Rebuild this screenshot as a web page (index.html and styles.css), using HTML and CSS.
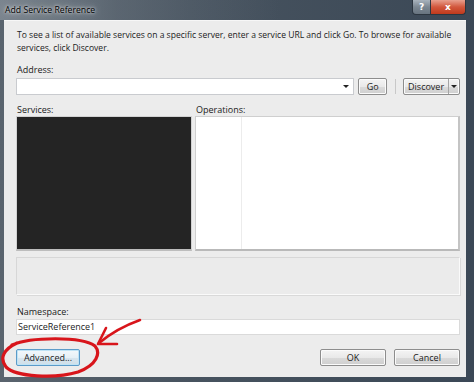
FILE: index.html
```html
<!DOCTYPE html>
<html lang="en">
<head>
  <meta charset="UTF-8">
  <title>Add Service Reference</title>
  <link rel="stylesheet" href="styles.css">
</head>
<body>
  <div class="window">
    <div class="titlebar">
      <span class="title">Add Service Reference</span>
      <div class="caption-buttons">
        <span class="cap-btn help">?</span>
        <span class="cap-btn close">x</span>
      </div>
    </div>

    <div class="client">
      <p class="intro">To see a list of available services on a specific server, enter a service URL and click Go. To browse for available<br>services, click Discover.</p>

      <label class="field-label">Address:</label>
      <div class="address-row">
        <div class="combo">
          <span class="combo-arrow"></span>
        </div>
        <button class="btn go">Go</button>
        <span class="sep"></span>
        <div class="btn split">
          <span class="split-main">Discover</span>
          <span class="split-arrow"><span class="combo-arrow"></span></span>
        </div>
      </div>

      <div class="lists">
        <div class="list-col services-col">
          <label class="field-label">Services:</label>
          <div class="services"></div>
        </div>
        <div class="list-col ops-col">
          <label class="field-label">Operations:</label>
          <div class="operations">
            <div class="ops-gutter"></div>
          </div>
        </div>
      </div>

      <div class="status-box"></div>

      <label class="field-label ns-label">Namespace:</label>
      <div class="textbox">ServiceReference1</div>

      <div class="button-row">
        <button class="btn advanced">Advanced...</button>
        <div class="right-buttons">
          <button class="btn wide">OK</button>
          <button class="btn wide">Cancel</button>
        </div>
      </div>
    </div>

    <svg class="annotation" width="474" height="382" viewBox="0 0 474 382">
      <path d="M12 345 C 30 337, 82 336, 95 346 C 101 353, 97 365, 78 372 C 55 379, 16 377, 6 367 C -1 358, 4 349, 17 343"
            fill="none" stroke="#d8151b" stroke-width="3.2" stroke-linecap="round"/>
      <path d="M140 320 C 126 325, 111 333, 99 343" fill="none" stroke="#d8151b" stroke-width="2.6" stroke-linecap="round"/>
      <path d="M106 328 L 98 344 L 117 344" fill="none" stroke="#d8151b" stroke-width="2.6" stroke-linecap="round" stroke-linejoin="round"/>
    </svg>
  </div>
</body>
</html>
```

FILE: styles.css
```css
* {
  box-sizing: border-box;
}

body {
  margin: 0;
  width: 474px;
  height: 382px;
  overflow: hidden;
  font-family: "Open Sans", sans-serif;
  font-size: 9px;
  color: #1b1b1b;
}

.window {
  position: relative;
  width: 474px;
  height: 382px;
  background: linear-gradient(90deg, #5a646e 0%, #47535f 40%, #3b4856 100%);
  padding: 0 8px 5px 4px;
  display: flex;
  flex-direction: column;
}

.titlebar {
  height: 20px;
  display: flex;
  align-items: flex-start;
  justify-content: space-between;
  margin-left: -4px;
  background: linear-gradient(90deg, rgba(150, 160, 170, 0.55) 0%, rgba(120, 130, 140, 0.3) 25%, rgba(80, 90, 100, 0) 60%);
}

.title {
  font-size: 8.7px;
  padding: 4px 0 0 5px;
  color: #000;
  text-shadow: 0 0 3px rgba(255, 255, 255, 0.9), 0 0 7px rgba(255, 255, 255, 0.7);
}

.caption-buttons {
  display: flex;
  margin-right: -8px;
  padding-right: 8px;
}

.cap-btn {
  height: 15px;
  display: flex;
  align-items: center;
  justify-content: center;
  color: #fff;
  font-family: "DejaVu Sans", sans-serif;
  font-weight: bold;
  font-size: 9px;
  border: 1px solid #2c3640;
  border-top: none;
}

.help {
  width: 19px;
  background: linear-gradient(#a9b3bd, #7b8792 50%, #68747f);
  border-radius: 0 0 0 4px;
}

.close {
  width: 35px;
  background: linear-gradient(#e8a08e, #d2573d 50%, #c03a1c);
  border-left: none;
  border-radius: 0 0 4px 0;
}

.client {
  flex: 1;
  background: #ececec;
  border-top: 1px solid #f7f7f7;
  padding: 8px 6px 0 12px;
  display: flex;
  flex-direction: column;
}

.intro {
  margin: 0 -6px 0 1px;
  font-size: 8.55px;
  line-height: 13px;
  white-space: nowrap;
}

.field-label {
  display: block;
  margin: 8px 0 0 1px;
  line-height: 13px;
}

.address-row {
  display: flex;
  align-items: center;
  margin-top: 2px;
  height: 17px;
}

.combo {
  width: 339px;
  height: 17px;
  background: #fff;
  border: 1px solid #c9cbcf;
  display: flex;
  align-items: center;
  justify-content: flex-end;
  padding-right: 4px;
}

.combo-arrow {
  width: 0;
  height: 0;
  border-left: 3px solid transparent;
  border-right: 3px solid transparent;
  border-top: 3px solid #222;
}

.btn {
  font-family: "Open Sans", sans-serif;
  font-size: 9px;
  color: #1b1b1b;
  height: 17px;
  padding: 0;
  border: 1px solid #8d8d8d;
  border-radius: 2px;
  background: linear-gradient(#f4f4f4, #e9e9e9 50%, #dadada 51%, #cfcfcf);
  box-shadow: inset 0 0 0 1px #fbfbfb;
}

.go {
  width: 29px;
  margin-left: 4px;
}

.sep {
  width: 1px;
  height: 15px;
  background: #c8c8c8;
  margin: 0 7px 0 8px;
}

.split {
  width: 57px;
  display: flex;
  align-items: stretch;
}

.split-main {
  flex: 1;
  display: flex;
  align-items: center;
  justify-content: center;
  border-right: 1px solid #a5a5a5;
}

.split-arrow {
  width: 10px;
  display: flex;
  align-items: center;
  justify-content: center;
}

.lists {
  display: flex;
  gap: 3px;
}

.list-col {
  display: flex;
  flex-direction: column;
}

.services-col {
  width: 176px;
}

.ops-col {
  flex: 1;
}

.services {
  height: 135px;
  background: #242424;
  border: 1px solid #d2d2d2;
  border-bottom: 2px solid #bdbdbd;
}

.operations {
  height: 135px;
  background: #fff;
  border: 1px solid #cfcfcf;
  border-bottom: 2px solid #b9b9b9;
  border-right: 2px solid #c4c4c4;
}

.ops-gutter {
  width: 46px;
  height: 100%;
  border-right: 1px solid #ececec;
}

.status-box {
  height: 38px;
  margin-top: 6px;
  background: #ebebeb;
  border: 1px solid #d7d7d7;
  border-right-color: #fafafa;
  border-bottom-color: #fafafa;
  box-shadow: 1px 1px 0 #d9d9d9;
}

.ns-label {
  margin-top: 10px;
}

.textbox {
  height: 16px;
  margin-top: 1px;
  background: #fff;
  border: 1px solid #dadada;
  line-height: 14px;
  padding-left: 1px;
}

.button-row {
  display: flex;
  justify-content: space-between;
  margin-top: 14px;
}

.advanced {
  width: 64px;
  border-color: #5b9bc9;
  background: linear-gradient(#f3f8fb, #e6f0f6 50%, #d7e5ee 51%, #cfdfe9);
  box-shadow: inset 0 0 0 1px #bfe3f5;
}

.right-buttons {
  display: flex;
  gap: 8px;
}

.wide {
  width: 66px;
}

.annotation {
  position: absolute;
  left: 0;
  top: 0;
  pointer-events: none;
}
```
